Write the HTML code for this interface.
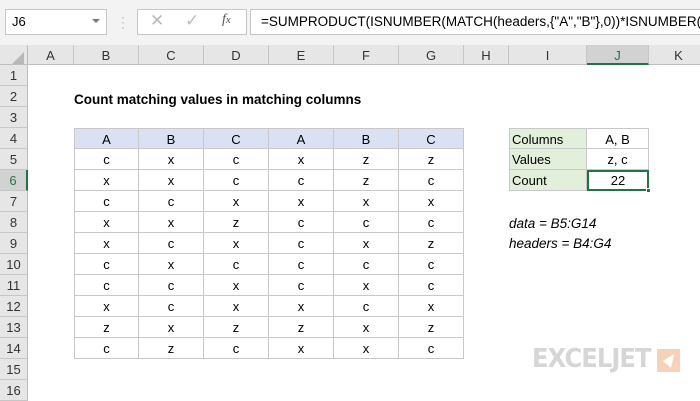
<!DOCTYPE html>
<html><head><style>
*{margin:0;padding:0;box-sizing:border-box}
body{width:700px;height:400px;overflow:hidden;background:#fff;font-family:"Liberation Sans",sans-serif;position:relative;font-size:13px;color:#000}
.a{position:absolute}
.ch{position:absolute;top:45px;height:20px;background:#e6e6e6;border-right:1px solid #c6c6c6;border-bottom:1px solid #bdbdbd;text-align:center;line-height:21px;font-size:13px;color:#333}
.rh{position:absolute;left:0;width:28px;height:21px;background:#e6e6e6;border-bottom:1px solid #c6c6c6;border-right:1px solid #bdbdbd;text-align:center;line-height:21px;font-size:13px;color:#333}
.c{position:absolute;height:21px;text-align:center;line-height:21px;font-size:13px;border-right:1px solid #c8c8c8;border-bottom:1px solid #c8c8c8}
</style></head><body>
<div class="a" style="left:0;top:0;width:700px;height:45px;background:#f3f3f3"></div>
<div class="a" style="left:5px;top:9px;width:102px;height:26px;background:#fff;border:1px solid #c6c6c6;line-height:24px;padding-left:6px;font-size:13px">J6</div>
<div class="a" style="left:92px;top:19px;width:0;height:0;border-left:4px solid transparent;border-right:4px solid transparent;border-top:4px solid #777"></div>
<div class="a" style="left:121px;top:15px;color:#aaa;font-size:12px;line-height:5px">·<br>·<br>·</div>
<div class="a" style="left:137px;top:9px;width:110px;height:26px;background:#fff;border:1px solid #c6c6c6"></div>
<div class="a" style="left:150px;top:11px;color:#bbb;font-size:17px">✕</div>
<div class="a" style="left:185px;top:11px;color:#bbb;font-size:17px">✓</div>
<div class="a" style="left:222px;top:12px;color:#555;font-size:14px;font-style:italic;font-family:'Liberation Serif',serif">f<span style="font-size:11px">x</span></div>
<div class="a" style="left:250px;top:9px;width:460px;height:26px;background:#fff;border:1px solid #c6c6c6;line-height:24px;padding-left:10px;font-size:13.5px;white-space:nowrap;overflow:hidden">=SUMPRODUCT(ISNUMBER(MATCH(headers,{"A","B"},0))*ISNUMBER(MATCH(data,{"z","c"},0)))</div>
<div class="a" style="left:0;top:45px;width:28px;height:20px;background:#e6e6e6;border-right:1px solid #bdbdbd;border-bottom:1px solid #bdbdbd"></div>
<div class="a" style="left:12px;top:52px;width:0;height:0;border-left:12px solid transparent;border-bottom:12px solid #b8b8b8"></div>
<div class="ch" style="left:28px;width:46px">A</div>
<div class="ch" style="left:74px;width:65px">B</div>
<div class="ch" style="left:139px;width:65px">C</div>
<div class="ch" style="left:204px;width:65px">D</div>
<div class="ch" style="left:269px;width:65px">E</div>
<div class="ch" style="left:334px;width:65px">F</div>
<div class="ch" style="left:399px;width:65px">G</div>
<div class="ch" style="left:464px;width:45px">H</div>
<div class="ch" style="left:509px;width:78px">I</div>
<div class="ch" style="left:587px;width:62px;background:#d2d2d2;border-bottom:2px solid #217346;color:#217346">J</div>
<div class="ch" style="left:649px;width:60px">K</div>
<div id="rows"></div>
<div class="a" style="left:74px;top:92px;font-weight:bold;font-size:13.5px">Count matching values in matching columns</div>
<div id="tbl"></div>
<div class="a" style="left:509px;top:216px;font-style:italic;font-size:13.5px">data = B5:G14</div>
<div class="a" style="left:509px;top:236px;font-style:italic;font-size:13.5px">headers = B4:G4</div>
<div class="a" style="left:532px;top:344px;font-size:26px;font-weight:bold;color:#d6d6d6;letter-spacing:-1px;font-family:'DejaVu Sans',sans-serif;transform:scaleX(0.93);transform-origin:left">EXCELJET</div>
<div class="a" style="left:657px;top:349px;width:23px;height:23px;background:#f6d3b8"></div>
<svg class="a" style="left:657px;top:349px" width="23" height="23"><polygon points="6,12 17,5 14,19" fill="#fff"/></svg>
<script>
var r='';
for(var i=1;i<=16;i++){var t=65+(i-1)*21;var s=i==6?'background:#d2d2d2;color:#217346;border-right:2px solid #217346;':'';r+='<div class="rh" style="top:'+t+'px;'+s+'">'+i+'</div>';}
document.getElementById('rows').innerHTML=r;
var d=["cxcxzz","xxcczc","ccxxxx","xxzccc","xcxcxz","cxcccc","ccxcxc","xcxxcx","zxzzxz","czcxxc"];
var L=[74,139,204,269,334,399],h='';
var hd="ABCABC";
for(var j=0;j<6;j++)h+='<div class="c" style="left:'+L[j]+'px;top:128px;width:65px;background:#d9e1f2;border-top:1px solid #c8c8c8;'+(j==0?'border-left:1px solid #c8c8c8;':'')+'">'+hd[j]+'</div>';
for(var i=0;i<10;i++)for(var j=0;j<6;j++)h+='<div class="c" style="left:'+L[j]+'px;top:'+(149+i*21)+'px;width:65px;'+(j==0?'border-left:1px solid #c8c8c8;':'')+'">'+d[i][j]+'</div>';
var lab=["Columns","Values","Count"],val=["A, B","z, c","22"];
for(var i=0;i<3;i++){h+='<div class="c" style="left:509px;top:'+(128+i*21)+'px;width:78px;background:#e2efda;text-align:left;padding-left:2px;border-left:1px solid #c8c8c8;'+(i==0?'border-top:1px solid #c8c8c8;':'')+'">'+lab[i]+'</div>';
h+='<div class="c" style="left:587px;top:'+(128+i*21)+'px;width:62px;'+(i==0?'border-top:1px solid #c8c8c8;':'')+(i==2?'border:2px solid #217346;line-height:18px;':'')+'">'+val[i]+'</div>';}
h+='<div class="a" style="left:646px;top:188px;width:5px;height:5px;background:#217346;border:1px solid #fff"></div>';
document.getElementById('tbl').innerHTML=h;
</script>
</body></html>
